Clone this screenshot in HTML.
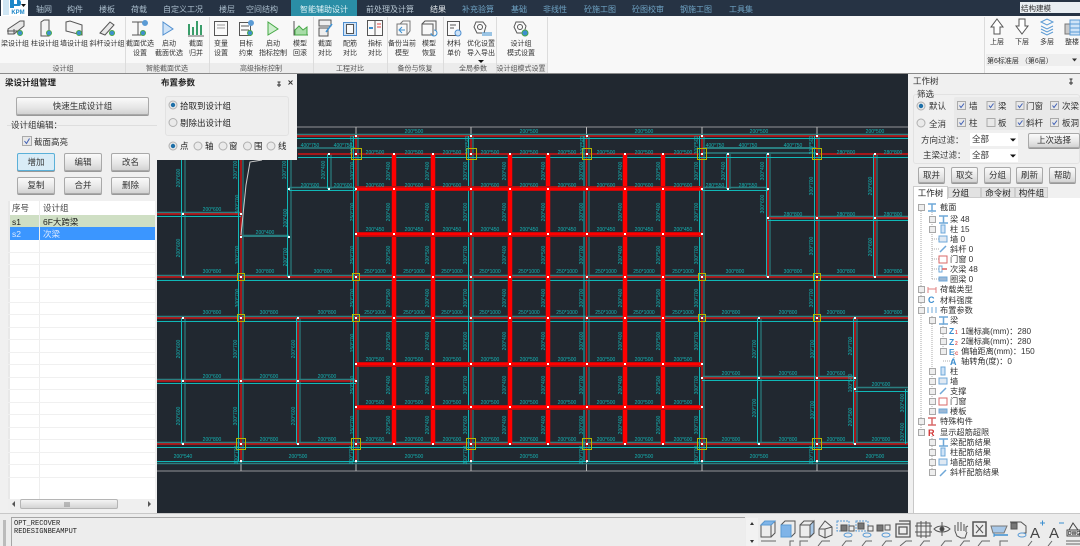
<!DOCTYPE html>
<html><head><meta charset="utf-8"><title>PKPM</title>
<style>
html,body{margin:0;padding:0;width:1080px;height:546px;overflow:hidden;background:#f0f0f0}
body{position:relative;font-family:"Liberation Sans","Noto Sans CJK SC",sans-serif;color:#222;filter:blur(.35px)}
.a{position:absolute}
.btn{position:absolute;box-sizing:border-box;border:1px solid #a9a9a9;border-radius:2px;background:linear-gradient(#fafafa,#e6e6e6 60%,#d2d2d2);text-align:center;font-size:8.5px;color:#333;box-shadow:0 1px 0 #999}
svg{position:absolute;left:0;top:0;font-family:"Liberation Sans","Noto Sans CJK SC",sans-serif}
</style></head><body>
<!-- menu -->
<div class="a" style="left:0;top:0;width:1080px;height:16px;background:#263344"></div>
<div class="a" style="left:291px;top:0;width:66px;height:16px;background:#2a8ea6"></div>
<div class="a" style="left:0;top:16px;width:1080px;height:57px;background:#f8f8f8;border-bottom:1px solid #8a8a8a"></div>
<div class="a" style="left:0;top:63px;width:547px;height:10px;background:#ececec"></div>
<div class="a" style="left:1px;top:0;width:27px;height:16px;background:#fff"></div>
<div class="a" style="left:1020px;top:2px;width:60px;height:11px;background:#e9eef2"></div>
<!-- canvas -->
<div class="a" style="left:157px;top:74px;width:751px;height:439px;background:#212830"></div>

<svg width="1080" height="546" viewBox="0 0 1080 546">
<!-- CAD drawing -->
<g fill="none">
<path stroke="#6e7176" stroke-width="1.5" d="M157 127H908M157 471H908"/>
<path stroke="#b8b8b8" d="M356 127V136M471 127V136M586.5 127V136M702 127V136M817 127V136M241 461V471M356 461V471M471 461V471M586.5 461V471M702 461V471M817 461V471"/>
<path stroke="#2a7e80" stroke-width="1.5" d="M297 134.5H908M297 148H356M702 148H817M702 153H817M289 187.5H356M702 187.5H768M157 212.5H241M768 216.5H908M241 235.5H289M157 275.5H908M157 316.5H908M702 376.5H855M157 379.5H356M855 387.5H908M157 442.5H908M157 463.5H908"/>
<path stroke="#2a7e80" stroke-width="2" d="M768 217H908M241 236H289M702 148H817M702 377H855"/>
<path stroke="#2a7e80" stroke-width="1.2" d="M243 160V461M358 136V461M473 136V461M589 136V461M704 136V461M819 136V461M185 154V277M185 318V444M291 154V277M300 318V444M331 154V189M730 154V189M770 154V277M877 154V277M761 318V444M857 318V444M908 389V444"/>
<path stroke="#d01212" stroke-width="1.5" d="M297 136H908M298 154H702M817 154H908M157 214H241M768 218H908M157 277H908M157 318H908M702 378H855M157 381H356M157 444H908M241 160V461M356 136V461M471 136V461M586.5 136V461M702 136V461M817 136V461M298 318V444M728 154V189M768 154V277M875 154V277M855 318V444"/>
<path stroke="#10b8b8" d="M297 138.5H908M298 157.5H908M289 190.5H356M702 190.5H768M157 216.5H241M768 220.5H908M157 280.5H908M157 321.5H908M702 380.5H855M157 383.5H356M855 391.5H908M157 447.5H908M157 461.5H908M238.5 160V461M353.5 136V461M468.5 136V461M584 136V461M699.5 136V461M814.5 136V461M181.5 154V277M181.5 318V444M287.5 154V277M296.5 318V444M327.5 154V189M726.5 154V189M766.5 154V277M873.5 154V277M757.5 318V444M853.5 318V444M905.5 389V444"/>
<path stroke="#f00" stroke-width="4.5" d="M394 154V444M433 154V444M510 154V444M548 154V444M625 154V444M663 154V444"/>
<path stroke="#f00" stroke-width="3.5" d="M356 189H702M356 234H702M356 364H702M356 407H702"/>
<path stroke="#b01010" stroke-width="1" d="M356 186.5H702M356 236.5H702M356 366.5H702M356 409.5H702"/>
<path stroke="#ccc" d="M262 160L250 162L246 185L243 215L241 235"/>
<!-- yellow boxes -->
<g stroke="#b5b500" stroke-width="1">
<rect x="351.5" y="148.5" width="10" height="11"/><rect x="466.5" y="148.5" width="10" height="11"/><rect x="582.5" y="148.5" width="9" height="11"/><rect x="697.5" y="148.5" width="9" height="11"/><rect x="812.5" y="148.5" width="9" height="11"/>
<rect x="237.5" y="273.5" width="7" height="7"/><rect x="352.5" y="273.5" width="7" height="7"/><rect x="698.5" y="273.5" width="7" height="7"/><rect x="813.5" y="273.5" width="7" height="7"/>
<rect x="237.5" y="314.5" width="7" height="7"/><rect x="352.5" y="314.5" width="7" height="7"/><rect x="698.5" y="314.5" width="7" height="7"/><rect x="813.5" y="314.5" width="7" height="7"/>
<rect x="236.5" y="438.5" width="9" height="11"/><rect x="351.5" y="438.5" width="9" height="11"/><rect x="466.5" y="438.5" width="9" height="11"/><rect x="582.5" y="438.5" width="9" height="11"/><rect x="697.5" y="438.5" width="9" height="11"/><rect x="812.5" y="438.5" width="9" height="11"/>
</g>
<!-- nodes -->
<path stroke="#fff" stroke-width="2" stroke-dasharray="2 1000" d="M355 136H357M470 136H472M586 136H588M701 136H703M816 136H818M355 154H357M393 154H395M432 154H434M470 154H472M509 154H511M547 154H549M586 154H588M624 154H626M662 154H664M701 154H703M727 154H729M767 154H769M816 154H818M874 154H876M288 154H290M328 154H330M182 154H184M355 189H357M393 189H395M432 189H434M470 189H472M509 189H511M547 189H549M586 189H588M624 189H626M662 189H664M701 189H703M727 189H729M767 189H769M288 189H290M328 189H330M355 234H357M393 234H395M432 234H434M470 234H472M509 234H511M547 234H549M586 234H588M624 234H626M662 234H664M701 234H703M767 218H769M816 218H818M874 218H876M182 214H184M240 214H242M240 237H242M288 237H290M182 277H184M240 277H242M288 277H290M355 277H357M393 277H395M432 277H434M470 277H472M509 277H511M547 277H549M586 277H588M624 277H626M662 277H664M701 277H703M767 277H769M816 277H818M874 277H876M182 318H184M240 318H242M297 318H299M355 318H357M393 318H395M432 318H434M470 318H472M509 318H511M547 318H549M586 318H588M624 318H626M662 318H664M701 318H703M758 318H760M816 318H818M854 318H856M355 364H357M393 364H395M432 364H434M470 364H472M509 364H511M547 364H549M586 364H588M624 364H626M662 364H664M701 364H703M182 381H184M240 381H242M297 381H299M355 381H357M701 378H703M758 378H760M816 378H818M854 378H856M854 389H856M355 407H357M393 407H395M432 407H434M470 407H472M509 407H511M547 407H549M586 407H588M624 407H626M662 407H664M701 407H703M182 444H184M240 444H242M297 444H299M355 444H357M393 444H395M432 444H434M470 444H472M509 444H511M547 444H549M586 444H588M624 444H626M662 444H664M701 444H703M758 444H760M816 444H818M854 444H856M240 461H242M355 461H357M470 461H472M586 461H588M701 461H703M816 461H818"/>
</g>
<!-- CAD labels horizontal -->
<g fill="#14b4b4" font-size="5" text-anchor="middle">
<text x="414" y="133">200*500</text><text x="529" y="133">200*500</text><text x="644" y="133">200*500</text><text x="759" y="133">200*500</text><text x="875" y="133">200*500</text>
<text x="310" y="147">400*750</text><text x="343" y="147">400*750</text><text x="715" y="147">400*750</text><text x="748" y="147">400*750</text><text x="793" y="147">400*750</text>
<text x="375" y="154">200*500</text><text x="414" y="154">200*500</text><text x="452" y="154">200*500</text><text x="490" y="154">200*500</text><text x="529" y="154">200*500</text><text x="567" y="154">200*500</text><text x="606" y="154">200*500</text><text x="644" y="154">200*500</text><text x="683" y="154">200*500</text><text x="846" y="154">280*800</text><text x="893" y="154">280*800</text>
<text x="310" y="187">200*600</text><text x="343" y="187">200*600</text><text x="375" y="187">200*600</text><text x="414" y="187">200*600</text><text x="452" y="187">200*600</text><text x="490" y="187">200*600</text><text x="529" y="187">200*600</text><text x="567" y="187">200*600</text><text x="606" y="187">200*600</text><text x="644" y="187">200*600</text><text x="683" y="187">200*600</text><text x="715" y="187">280*550</text><text x="748" y="187">280*550</text>
<text x="212" y="211">200*600</text><text x="793" y="216">280*800</text><text x="846" y="216">280*800</text><text x="893" y="216">280*800</text>
<text x="375" y="231">200*450</text><text x="414" y="231">200*450</text><text x="452" y="231">200*450</text><text x="490" y="231">200*450</text><text x="529" y="231">200*450</text><text x="567" y="231">200*450</text><text x="606" y="231">200*450</text><text x="644" y="231">200*450</text><text x="683" y="231">200*450</text><text x="265" y="234">200*400</text>
<text x="212" y="273">300*800</text><text x="265" y="273">300*800</text><text x="323" y="273">300*800</text><text x="375" y="273">250*1000</text><text x="414" y="273">250*1000</text><text x="452" y="273">250*1000</text><text x="490" y="273">250*1000</text><text x="529" y="273">250*1000</text><text x="567" y="273">250*1000</text><text x="606" y="273">250*1000</text><text x="644" y="273">250*1000</text><text x="683" y="273">250*1000</text><text x="735" y="273">300*800</text><text x="793" y="273">300*800</text><text x="846" y="273">300*800</text><text x="893" y="273">300*800</text>
<text x="212" y="314">300*800</text><text x="269" y="314">300*800</text><text x="327" y="314">300*800</text><text x="375" y="314">250*1000</text><text x="414" y="314">250*1000</text><text x="452" y="314">250*1000</text><text x="490" y="314">250*1000</text><text x="529" y="314">250*1000</text><text x="567" y="314">250*1000</text><text x="606" y="314">250*1000</text><text x="644" y="314">250*1000</text><text x="683" y="314">250*1000</text><text x="731" y="314">200*800</text><text x="788" y="314">200*800</text><text x="836" y="314">200*800</text><text x="893" y="314">300*800</text>
<text x="375" y="361">200*500</text><text x="414" y="361">200*500</text><text x="452" y="361">200*500</text><text x="490" y="361">200*500</text><text x="529" y="361">200*500</text><text x="567" y="361">200*500</text><text x="606" y="361">200*500</text><text x="644" y="361">200*500</text><text x="683" y="361">200*500</text>
<text x="731" y="375">200*600</text><text x="788" y="375">200*600</text><text x="836" y="375">200*600</text><text x="212" y="378">200*600</text><text x="269" y="378">200*600</text><text x="327" y="378">200*600</text><text x="881" y="386">200*600</text>
<text x="375" y="404">200*500</text><text x="414" y="404">200*500</text><text x="452" y="404">200*500</text><text x="490" y="404">200*500</text><text x="529" y="404">200*500</text><text x="567" y="404">200*500</text><text x="606" y="404">200*500</text><text x="644" y="404">200*500</text><text x="683" y="404">200*500</text>
<text x="212" y="441">200*800</text><text x="269" y="441">200*800</text><text x="327" y="441">200*800</text><text x="375" y="441">200*600</text><text x="414" y="441">200*600</text><text x="452" y="441">200*600</text><text x="490" y="441">200*600</text><text x="529" y="441">200*600</text><text x="567" y="441">200*600</text><text x="606" y="441">200*600</text><text x="644" y="441">200*600</text><text x="683" y="441">200*600</text><text x="731" y="441">200*800</text><text x="788" y="441">200*800</text><text x="836" y="441">200*800</text><text x="881" y="441">200*800</text>
<text x="183" y="458">200*540</text><text x="298" y="458">200*500</text><text x="414" y="458">200*500</text><text x="529" y="458">200*500</text><text x="644" y="458">200*500</text><text x="759" y="458">200*500</text><text x="875" y="458">200*500</text>
</g>
<!-- CAD labels vertical -->
<g fill="#14b4b4" font-size="5" text-anchor="middle">
<text transform="translate(354,145) rotate(-90)">300*500</text><text transform="translate(469,145) rotate(-90)">300*500</text><text transform="translate(584,145) rotate(-90)">300*500</text><text transform="translate(698,145) rotate(-90)">300*500</text><text transform="translate(813,145) rotate(-90)">300*500</text>
<text transform="translate(354,171) rotate(-90)">100*700</text><text transform="translate(390,171) rotate(-90)">200*400</text><text transform="translate(429,171) rotate(-90)">200*400</text><text transform="translate(467,171) rotate(-90)">300*600</text><text transform="translate(506,171) rotate(-90)">200*400</text><text transform="translate(545,171) rotate(-90)">200*400</text><text transform="translate(583,171) rotate(-90)">300*600</text><text transform="translate(622,171) rotate(-90)">200*400</text><text transform="translate(660,171) rotate(-90)">200*500</text><text transform="translate(698,171) rotate(-90)">300*700</text><text transform="translate(725,171) rotate(-90)">300*400</text><text transform="translate(764,171) rotate(-90)">300*400</text><text transform="translate(237,170) rotate(-90)">300*700</text><text transform="translate(286,170) rotate(-90)">100*700</text><text transform="translate(325,170) rotate(-90)">200*400</text>
<text transform="translate(180,178) rotate(-90)">200*600</text><text transform="translate(813,186) rotate(-90)">300*700</text><text transform="translate(872,186) rotate(-90)">200*600</text>
<text transform="translate(239,204) rotate(-90)">500*700</text><text transform="translate(764,204) rotate(-90)">300*600</text>
<text transform="translate(354,212) rotate(-90)">250*700</text><text transform="translate(390,212) rotate(-90)">200*400</text><text transform="translate(429,212) rotate(-90)">200*400</text><text transform="translate(467,212) rotate(-90)">300*600</text><text transform="translate(506,212) rotate(-90)">200*400</text><text transform="translate(545,212) rotate(-90)">200*400</text><text transform="translate(583,212) rotate(-90)">300*600</text><text transform="translate(622,212) rotate(-90)">200*400</text><text transform="translate(660,212) rotate(-90)">200*400</text><text transform="translate(698,212) rotate(-90)">200*700</text><text transform="translate(287,218) rotate(-90)">200*400</text>
<text transform="translate(180,248) rotate(-90)">200*600</text><text transform="translate(813,246) rotate(-90)">300*700</text><text transform="translate(872,247) rotate(-90)">200*600</text><text transform="translate(239,255) rotate(-90)">300*700</text><text transform="translate(287,257) rotate(-90)">200*700</text>
<text transform="translate(354,255) rotate(-90)">250*700</text><text transform="translate(390,255) rotate(-90)">200*500</text><text transform="translate(429,255) rotate(-90)">200*500</text><text transform="translate(467,255) rotate(-90)">300*700</text><text transform="translate(506,255) rotate(-90)">200*400</text><text transform="translate(545,255) rotate(-90)">200*500</text><text transform="translate(583,255) rotate(-90)">300*700</text><text transform="translate(622,255) rotate(-90)">200*400</text><text transform="translate(660,255) rotate(-90)">200*500</text><text transform="translate(698,255) rotate(-90)">300*700</text>
<text transform="translate(239,298) rotate(-90)">300*700</text><text transform="translate(354,298) rotate(-90)">250*700</text><text transform="translate(390,298) rotate(-90)">200*500</text><text transform="translate(429,298) rotate(-90)">200*400</text><text transform="translate(467,298) rotate(-90)">300*700</text><text transform="translate(506,298) rotate(-90)">200*400</text><text transform="translate(545,298) rotate(-90)">200*400</text><text transform="translate(583,298) rotate(-90)">300*700</text><text transform="translate(622,298) rotate(-90)">200*400</text><text transform="translate(660,298) rotate(-90)">200*500</text><text transform="translate(698,298) rotate(-90)">300*700</text><text transform="translate(813,298) rotate(-90)">300*700</text>
<text transform="translate(354,343) rotate(-90)">150*700</text><text transform="translate(390,341) rotate(-90)">200*500</text><text transform="translate(429,341) rotate(-90)">200*400</text><text transform="translate(467,341) rotate(-90)">300*600</text><text transform="translate(506,341) rotate(-90)">200*400</text><text transform="translate(545,341) rotate(-90)">200*400</text><text transform="translate(583,341) rotate(-90)">300*600</text><text transform="translate(622,341) rotate(-90)">200*400</text><text transform="translate(660,341) rotate(-90)">200*500</text><text transform="translate(698,341) rotate(-90)">300*700</text><text transform="translate(852,346) rotate(-90)">200*700</text>
<text transform="translate(180,349) rotate(-90)">200*600</text><text transform="translate(237,349) rotate(-90)">300*700</text><text transform="translate(295,349) rotate(-90)">200*600</text><text transform="translate(756,349) rotate(-90)">200*700</text><text transform="translate(814,349) rotate(-90)">300*700</text>
<text transform="translate(354,385) rotate(-90)">250*700</text><text transform="translate(390,385) rotate(-90)">200*400</text><text transform="translate(429,385) rotate(-90)">200*400</text><text transform="translate(467,385) rotate(-90)">300*700</text><text transform="translate(506,385) rotate(-90)">200*400</text><text transform="translate(545,385) rotate(-90)">200*400</text><text transform="translate(583,385) rotate(-90)">300*700</text><text transform="translate(622,385) rotate(-90)">200*400</text><text transform="translate(660,385) rotate(-90)">200*500</text><text transform="translate(698,385) rotate(-90)">300*700</text><text transform="translate(852,383) rotate(-90)">100*500</text>
<text transform="translate(904,403) rotate(-90)">300*400</text><text transform="translate(756,408) rotate(-90)">200*700</text><text transform="translate(814,410) rotate(-90)">300*700</text><text transform="translate(852,417) rotate(-90)">200*500</text><text transform="translate(180,416) rotate(-90)">200*600</text><text transform="translate(237,416) rotate(-90)">300*700</text><text transform="translate(295,416) rotate(-90)">200*600</text>
<text transform="translate(354,425) rotate(-90)">150*700</text><text transform="translate(390,425) rotate(-90)">200*500</text><text transform="translate(429,425) rotate(-90)">200*400</text><text transform="translate(467,425) rotate(-90)">300*600</text><text transform="translate(506,425) rotate(-90)">200*400</text><text transform="translate(545,425) rotate(-90)">200*400</text><text transform="translate(583,425) rotate(-90)">300*600</text><text transform="translate(622,425) rotate(-90)">200*400</text><text transform="translate(660,425) rotate(-90)">200*500</text><text transform="translate(698,425) rotate(-90)">300*700</text><text transform="translate(904,432) rotate(-90)">300*400</text>
<text transform="translate(238,455) rotate(-90)">300*700</text><text transform="translate(353,455) rotate(-90)">300*700</text><text transform="translate(467,455) rotate(-90)">300*700</text><text transform="translate(583,455) rotate(-90)">300*700</text><text transform="translate(698,455) rotate(-90)">300*700</text><text transform="translate(813,455) rotate(-90)">300*700</text>
</g>
</svg>

<!-- left panel -->
<div class="a" style="left:0;top:74px;width:157px;height:439px;background:#f0f0f0"></div>
<div class="a" style="left:157px;top:74px;width:140px;height:86px;background:#f0f0f0"></div>
<div class="a" style="left:165px;top:96px;width:122px;height:38px;border:1px solid #e2e2e2;border-radius:3px;background:#eeeeee"></div>
<div class="a" style="left:7px;top:125px;width:150px;height:1px;background:#dedede"></div>
<div class="btn" style="left:16px;top:97px;width:133px;height:18px;line-height:16px">快速生成设计组</div>
<div class="btn" style="left:17px;top:153px;width:38px;height:18px;line-height:16px;background:#d9ecf7;border-color:#5bb0d8">增加</div>
<div class="btn" style="left:64px;top:153px;width:38px;height:18px;line-height:16px">编辑</div>
<div class="btn" style="left:111px;top:153px;width:39px;height:18px;line-height:16px">改名</div>
<div class="btn" style="left:17px;top:177px;width:38px;height:17px;line-height:15px">复制</div>
<div class="btn" style="left:64px;top:177px;width:38px;height:17px;line-height:15px">合并</div>
<div class="btn" style="left:111px;top:177px;width:39px;height:17px;line-height:15px">删除</div>
<!-- table -->
<div class="a" style="left:8px;top:201px;width:147px;height:298px;background:#fff"></div>
<div class="a" style="left:8px;top:201px;width:2px;height:298px;background:#e8e8e8"></div>
<div class="a" style="left:10px;top:215px;width:145px;height:12px;background:#cfdfc4"></div>
<div class="a" style="left:10px;top:227px;width:145px;height:13px;background:#3b96ff"></div>
<div class="a" style="left:39px;top:201px;width:1px;height:298px;background:#eeeeee"></div>
<div class="a" style="left:8px;top:252px;width:147px;height:1px;background:#f0f0f0;box-shadow:0 12px #f0f0f0,0 25px #f0f0f0,0 37px #f0f0f0,0 50px #f0f0f0,0 62px #f0f0f0,0 75px #f0f0f0,0 87px #f0f0f0,0 100px #f0f0f0,0 112px #f0f0f0,0 125px #f0f0f0,0 137px #f0f0f0,0 150px #f0f0f0,0 162px #f0f0f0,0 175px #f0f0f0,0 187px #f0f0f0,0 200px #f0f0f0,0 212px #f0f0f0,0 225px #f0f0f0"></div>
<div class="a" style="left:8px;top:499px;width:147px;height:11px;background:#efefef"></div>
<div class="a" style="left:20px;top:499px;width:98px;height:10px;box-sizing:border-box;border:1px solid #b5b5b5;border-radius:2px;background:linear-gradient(#f4f4f4,#d4d4d4)"></div>
<!-- right panel -->
<div class="a" style="left:908px;top:74px;width:172px;height:439px;background:#f0f0f0"></div>
<div class="a" style="left:913px;top:198px;width:167px;height:315px;background:#fff;border-left:1px solid #c8c8c8"></div>
<div class="a" style="left:913px;top:94px;width:167px;height:70px;border:1px solid #e2e2e2;border-radius:3px;box-sizing:border-box"></div>
<div class="a" style="left:954px;top:97px;width:126px;height:33px;background:#e9e9e9;border-radius:2px"></div>
<div class="a" style="left:970px;top:133px;width:48px;height:13px;background:#fff"></div>
<div class="a" style="left:970px;top:149px;width:48px;height:13px;background:#fff"></div>
<div class="btn" style="left:1028px;top:133px;width:52px;height:15px;line-height:13px;font-size:8.5px">上次选择</div>
<div class="btn" style="left:918px;top:167px;width:27px;height:16px;line-height:14px">取并</div>
<div class="btn" style="left:951px;top:167px;width:27px;height:16px;line-height:14px">取交</div>
<div class="btn" style="left:984px;top:167px;width:27px;height:16px;line-height:14px">分组</div>
<div class="btn" style="left:1016px;top:167px;width:27px;height:16px;line-height:14px">刷新</div>
<div class="btn" style="left:1049px;top:167px;width:27px;height:16px;line-height:14px">帮助</div>
<div class="a" style="left:913px;top:186px;width:35px;height:13px;background:#fff;border:1px solid #ccc;border-bottom:0;box-sizing:border-box;font-size:8.5px;text-align:center;line-height:12px">工作树</div>
<div class="a" style="left:948px;top:187px;width:33px;height:11px;background:#e2e2e2;border:1px solid #ccc;box-sizing:border-box;font-size:8.5px;text-align:left;padding-left:3px;line-height:10px">分组</div>
<div class="a" style="left:981px;top:187px;width:34px;height:11px;background:#e2e2e2;border:1px solid #ccc;box-sizing:border-box;font-size:8.5px;text-align:center;line-height:10px">命令树</div>
<div class="a" style="left:1015px;top:187px;width:33px;height:11px;background:#e2e2e2;border:1px solid #ccc;box-sizing:border-box;font-size:8.5px;text-align:center;line-height:10px">构件组</div>
<!-- console & bottom -->
<div class="a" style="left:0;top:513px;width:1080px;height:33px;background:#ececec;border-top:1px solid #c8c8c8;box-sizing:border-box"></div>
<div class="a" style="left:11px;top:517px;width:734px;height:29px;border:1px solid #a5a5a5;border-right:0;border-bottom:0;box-sizing:border-box;background:#ededed;font:7px/8px 'Liberation Mono',monospace;padding:2px 0 0 2px;color:#222">OPT_RECOVER<br>REDESIGNBEAMPUT</div>
<div class="a" style="left:3px;top:520px;width:3px;height:26px;background:#bbb"></div>
<div class="a" style="left:746px;top:518px;width:12px;height:28px;background:#f2f2f2"></div>

<svg width="1080" height="546" viewBox="0 0 1080 546">
<!-- separators -->
<path fill="none" stroke="#dcdcdc" d="M125.5 17V73M209.5 17V73M313.5 17V73M387.5 17V73M443.5 17V73M496.5 17V73M547.5 17V73M984.5 17V73"/>
<!-- logo -->
<path d="M10 0H14V8H10ZM14 0H19Q21 0 21 3T19 6H14V4H17V0Z" fill="#1e87c8"/>
<rect x="3" y="0" width="6" height="15" fill="#cfe6f4"/>
<text x="18" y="14" font-size="6" font-weight="bold" fill="#1e87c8" text-anchor="middle" font-family="Liberation Sans">KPM</text>
<path d="M21 4H26L23.500 7Z" fill="#111"/>
<!-- menu text -->
<g fill="#a9bccb" font-size="8" text-anchor="middle">
<text x="44" y="12">轴网</text><text x="75" y="12">构件</text><text x="107" y="12">楼板</text><text x="139" y="12">荷载</text><text x="183" y="12">自定义工况</text><text x="227" y="12">楼层</text><text x="262" y="12">空间结构</text>
<text x="324" y="12" fill="#dff2f6">智能辅助设计</text>
<text x="390" y="12" fill="#b9c8d4">前处理及计算</text><text x="438" y="12" fill="#e0e6ea">结果</text>
</g>
<g fill="#6fa3c4" font-size="8" text-anchor="middle">
<text x="478" y="12">补充验算</text><text x="519" y="12">基础</text><text x="555" y="12">非线性</text><text x="600" y="12">砼施工图</text><text x="648" y="12">砼图校审</text><text x="696" y="12">钢施工图</text><text x="741" y="12">工具集</text>
</g>
<text x="1021" y="11" font-size="7.5" fill="#333">结构建模</text>
<!-- ribbon labels -->
<g fill="#333" font-size="7" text-anchor="middle">
<text x="15" y="45.5">梁设计组</text><text x="45" y="45.5">柱设计组</text><text x="74" y="45.5">墙设计组</text><text x="107" y="45.5">斜杆设计组</text>
<text x="140" y="45.5">截面优选</text><text x="140" y="55">设置</text><text x="169" y="45.5">启动</text><text x="169" y="55">截面优选</text><text x="196" y="45.5">截面</text><text x="196" y="55">归并</text>
<text x="221" y="45.5">变量</text><text x="221" y="55">设置</text><text x="246" y="45.5">目标</text><text x="246" y="55">约束</text><text x="273" y="45.5">启动</text><text x="273" y="55">指标控制</text><text x="300" y="45.5">模型</text><text x="300" y="55">回滚</text>
<text x="325" y="45.5">截面</text><text x="325" y="55">对比</text><text x="350" y="45.5">配筋</text><text x="350" y="55">对比</text><text x="375" y="45.5">指标</text><text x="375" y="55">对比</text>
<text x="402" y="45.5">备份当前</text><text x="402" y="55">模型</text><text x="429" y="45.5">模型</text><text x="429" y="55">恢复</text><text x="454" y="45.5">材料</text><text x="454" y="55">单价</text><text x="481" y="45.5">优化设置</text><text x="481" y="55">导入导出</text><text x="521" y="45.5">设计组</text><text x="521" y="55">模式设置</text>
<g fill="#555"><text x="63" y="70.5">设计组</text><text x="167" y="70.5">智能截面优选</text><text x="261" y="70.5">高级指标控制</text><text x="350" y="70.5">工程对比</text><text x="415" y="70.5">备份与恢复</text><text x="473" y="70.5">全局参数</text><text x="521" y="70.5">设计组模式设置</text></g>
<text x="997" y="44">上层</text><text x="1022" y="44">下层</text><text x="1047" y="44">多层</text><text x="1072" y="44">整楼</text>
</g>
<path d="M478 60H484L481 63Z" fill="#111"/>
<rect x="986" y="54" width="94" height="12" fill="#eeeeee"/>
<text x="987" y="63" font-size="7" fill="#333">第6标准层 （第6层）</text>
<path d="M1072 58.5H1077L1074.5 61.5Z" fill="#333"/>
<!-- ribbon icons -->
<g fill="none" stroke="#555" stroke-width="1">
<path d="M8 29L20 21H24V26L14 34H8Z" fill="#e8e8e8"/><path d="M7 31H22M14 34V29"/><circle cx="20" cy="33" r="2.5" fill="#3d8fd0" stroke="#4aa84a"/>
<path d="M41 30V22L44 20H49V36H41Z" fill="#f4f4f4"/><circle cx="49" cy="33" r="2.5" fill="#3d8fd0" stroke="#4aa84a"/>
<path d="M66 22L70 21L82 25V35L66 31Z" fill="#f4f4f4"/><circle cx="79" cy="33" r="2.5" fill="#3d8fd0" stroke="#4aa84a"/>
<path d="M100 33L110 22L114 25L105 35Z" fill="#e8e8e8"/><circle cx="112" cy="33" r="2.5" fill="#3d8fd0" stroke="#4aa84a"/>
<path d="M132 22H144M138 22V35M132 35H142"/><circle cx="145" cy="23" r="2.5" fill="#5b9bd5" stroke="#5b9bd5"/><circle cx="143" cy="33" r="2.5" fill="#3d8fd0" stroke="#4aa84a"/>
<path d="M163 22L173 29L163 35Z" fill="#cfe3f7" stroke="#4f8fd0"/>
<path d="M189 35V24M193 35V27M197 35V21M201 35V25" stroke="#3a9d6a" stroke-width="2"/><path d="M188 36H204" stroke="#666"/>
<rect x="214.5" y="21.5" width="13" height="14" fill="#fafafa"/><path d="M217 25H225M217 28H225" stroke="#999"/>
<rect x="239.5" y="22.5" width="11" height="13" fill="#fafafa"/><path d="M241 26H249M241 30H249"/><circle cx="250" cy="33" r="2.5" fill="#3d8fd0" stroke="#4aa84a"/><circle cx="251" cy="23" r="2.5" fill="#5b9bd5" stroke="#5b9bd5"/>
<path d="M268 22L278 29L268 35Z" fill="#cdeecd" stroke="#45a845"/>
<path d="M294 21V35H308" /><path d="M295 35V30L299 26L303 30L307 27V35Z" fill="#a8dca8" stroke="#45a845"/>
<rect x="319" y="20" width="12" height="6" fill="#eee"/><rect x="319" y="28" width="9" height="8" fill="#eee"/><path d="M326 32L332 24" stroke="#3d8fd0" stroke-width="1.5"/>
<rect x="343.5" y="22.5" width="13" height="13" fill="#cfe3f7" stroke="#4f8fd0"/><rect x="346.5" y="24.5" width="7" height="9" fill="#fafafa"/>
<rect x="367.5" y="20.5" width="15" height="15" fill="#fafafa"/><path d="M375 20V36"/><path d="M369 28H373" stroke="#3d8fd0" stroke-width="2"/><path d="M377 24H381M377 27H381" stroke="#e04040"/>
<path d="M397 24H407V35H397ZM400 24L403 21H410V31L407 35" stroke="#777"/><path d="M405 30H400M402 27L399 30L402 33" stroke="#3d8fd0"/>
<path d="M422 24H433V35H422ZM422 24L425 21H436V31" stroke="#555"/><path d="M431 33A3 3 0 1 0 434 30" stroke="#3d8fd0"/>
<rect x="447.5" y="21.5" width="12" height="14" fill="#fafafa"/><path d="M450 25H456M450 28H454"/><circle cx="458" cy="33" r="3" fill="#cfe3f7" stroke="#4f8fd0"/>
<path d="M474 27L476 22H483L486 26L484 33H477Z" fill="#fafafa"/><circle cx="480" cy="27" r="2.5"/><path d="M482 33H492M482 35H492" stroke="#3d8fd0"/>
<path d="M514 27L516 22H523L526 26L524 33H517Z" fill="#fafafa"/><circle cx="520" cy="27" r="2.5"/><circle cx="525" cy="33" r="3" fill="#3d8fd0" stroke="#4aa84a"/>
<path d="M997 19L1003 27H1000V34H994V27H991Z" fill="#fff"/>
<path d="M1022 34L1028 26H1025V19H1019V26H1016Z" fill="#fff"/>
<path d="M1041 22L1047 19L1053 22L1047 25ZM1041 26L1047 29L1053 26M1041 29L1047 32L1053 29M1041 32L1047 35L1053 32" stroke="#5b9bd5"/>
<rect x="1065" y="24" width="5" height="10" fill="#c9c9c9" stroke="#777"/><path d="M1070 20H1080V35H1070ZM1070 24H1080M1070 28H1080M1070 32H1080" stroke="#5b9bd5" fill="#cfe3f7"/>
</g>
<!-- left panel text -->
<g fill="#222" font-size="8.5">
<text x="5" y="85.5" font-weight="bold" font-size="8.5">梁设计组管理</text>
<text x="161" y="85.5" font-weight="bold">布置参数</text>
<text x="11" y="128" fill="#333">设计组编辑：</text>
<text x="34" y="145" fill="#333">截面高亮</text>
<text x="12" y="211" fill="#444">序号</text><text x="43" y="211" fill="#444">设计组</text>
<text x="12" y="225">s1</text><text x="43" y="225">6F大跨梁</text>
<text x="12" y="237" fill="#dbe9ff">s2</text><text x="43" y="237" fill="#dbe9ff">次梁</text>
<text x="180" y="109">拾取到设计组</text><text x="180" y="126">剔除出设计组</text>
<text x="180" y="149">点</text><text x="205" y="149">轴</text><text x="229" y="149">窗</text><text x="254" y="149">围</text><text x="278" y="149">线</text>
</g>
<path d="M279 82V85M277.5 82H280.5M277 85H281M279 85V87" stroke="#333" fill="none"/><path d="M288.5 80.5L292.5 84.5M292.5 80.5L288.5 84.5" stroke="#333" fill="none"/>
<!-- radios -->
<g fill="#eaeaea" stroke="#b0b0b0">
<circle cx="173" cy="105" r="4"/><circle cx="173" cy="122.5" r="4"/><circle cx="173" cy="146" r="4"/><circle cx="198" cy="146" r="4"/><circle cx="223" cy="146" r="4"/><circle cx="247.5" cy="146" r="4"/><circle cx="271" cy="146" r="4"/><circle cx="921" cy="106" r="4"/><circle cx="921" cy="123" r="4"/>
</g>
<g fill="#1d6fa8"><circle cx="173" cy="105" r="2.2"/><circle cx="173" cy="146" r="2.2"/><circle cx="921" cy="106" r="2.2"/></g>
<!-- checkboxes -->
<g fill="#e8e8e8" stroke="#aaa">
<rect x="22.5" y="136.5" width="9" height="9"/><rect x="957.5" y="101.5" width="8" height="8"/><rect x="987" y="101.5" width="8" height="8"/><rect x="1016" y="101.5" width="8" height="8"/><rect x="1050.5" y="101.5" width="8" height="8"/><rect x="957.5" y="118.5" width="8" height="8"/><rect x="987" y="118.5" width="8" height="8"/><rect x="1016" y="118.5" width="8" height="8"/><rect x="1050.5" y="118.5" width="8" height="8"/>
</g>
<path fill="none" stroke="#3f5fb5" d="M24.5 141L26.5 143.5L29.5 138.5M959.5 105.5L961 107.5L964 103.5M989 105.5L990.5 107.5L993.5 103.5M1018 105.5L1019.5 107.5L1022.5 103.5M1052.5 105.5L1054 107.5L1057 103.5M959.5 122.5L961 124.5L964 120.5M1018 122.5L1019.5 124.5L1022.5 120.5M1052.5 122.5L1054 124.5L1057 120.5"/>
<!-- right panel text -->
<g fill="#333" font-size="8.5">
<text x="913" y="84">工作树</text><text x="917" y="97">筛选</text>
<text x="929" y="109">默认</text><text x="929" y="127">全消</text>
<text x="969" y="109">墙</text><text x="998" y="109">梁</text><text x="1026" y="109">门窗</text><text x="1062" y="109">次梁</text>
<text x="969" y="126">柱</text><text x="998" y="126">板</text><text x="1026" y="126">斜杆</text><text x="1062" y="126">板洞</text>
<text x="921" y="143">方向过滤：</text><text x="972" y="142">全部</text><text x="923" y="158">主梁过滤：</text><text x="972" y="158">全部</text>
</g>
<path d="M1010 138.5H1016L1013 141.5Z M1010 154.5H1016L1013 157.5Z" fill="#111"/>
<path d="M1071 79V83M1069.500 79H1072.500M1069 83H1073M1071 83V85" stroke="#333" fill="none"/>
<!-- tree lines & boxes -->
<path fill="none" stroke="#aaa" stroke-dasharray="1 1" d="M921 211V432M932 212V279M932 316V411M943 324V351M932 436V472M932 279H940M943 361H952M932 239H940M932 249H940M932 259H940M932 269H940M954 351V361"/>
<g fill="#eee" stroke="#a8a8a8"><rect x="918.500" y="204.500" width="6" height="6"/><rect x="929.500" y="216.500" width="6" height="6"/><rect x="929.500" y="226.500" width="6" height="6"/><rect x="918.500" y="286.500" width="6" height="6"/><rect x="918.500" y="296.500" width="6" height="6"/><rect x="918.500" y="307.500" width="6" height="6"/><rect x="929.500" y="317.500" width="6" height="6"/><rect x="940.500" y="327.500" width="6" height="6"/><rect x="940.500" y="338.500" width="6" height="6"/><rect x="940.500" y="348.500" width="6" height="6"/><rect x="929.500" y="368.500" width="6" height="6"/><rect x="929.500" y="378.500" width="6" height="6"/><rect x="929.500" y="388.500" width="6" height="6"/><rect x="929.500" y="398.500" width="6" height="6"/><rect x="929.500" y="408.500" width="6" height="6"/><rect x="918.500" y="418.500" width="6" height="6"/><rect x="918.500" y="429.500" width="6" height="6"/><rect x="929.500" y="439.500" width="6" height="6"/><rect x="929.500" y="449.500" width="6" height="6"/><rect x="929.500" y="459.500" width="6" height="6"/><rect x="929.500" y="469.500" width="6" height="6"/></g>
<!-- tree icons -->
<g fill="none" stroke="#6fa8d8" stroke-width="1.5">
<path d="M928 204H936M932 204V211M928 211H936"/><path d="M939 216H948M943.500 216V223M939 223H948"/><rect x="941" y="225" width="4" height="8" fill="#cfe3f7" stroke-width="1"/><rect x="939" y="236" width="8" height="6" fill="#dfe9f3" stroke-width="1"/><path d="M940 252L946 246"/><rect x="939" y="256" width="8" height="7" stroke="#d96a6a" stroke-width="1"/><rect x="939" y="266" width="3" height="6" stroke-width="1"/><path d="M942 269H947" stroke="#e06060"/><rect x="939" y="277" width="8" height="4" fill="#9cb9d6" stroke-width="1"/>
<path d="M928 287V293M936 287V293M928 289H936" stroke="#e08080" stroke-width="1"/><path d="M928 307V313M936 307V313M932 307V313" stroke-width="1"/><path d="M939 317H948M943.500 317V324M939 324H948"/>
<rect x="941" y="367" width="4" height="8" fill="#cfe3f7" stroke-width="1"/><rect x="939" y="378" width="8" height="6" fill="#dfe9f3" stroke-width="1"/><path d="M940 394L946 388"/><rect x="939" y="398" width="8" height="7" stroke="#d96a6a" stroke-width="1"/><rect x="939" y="409" width="8" height="4" fill="#9cb9d6" stroke-width="1"/>
<path d="M928 418H936M932 418V425M928 425H936" stroke="#d96a6a"/>
<path d="M939 439H948M943.500 439V446M939 446H948"/><rect x="941" y="448" width="4" height="8" fill="#cfe3f7" stroke-width="1"/><rect x="939" y="459" width="8" height="6" fill="#dfe9f3" stroke-width="1"/><path d="M940 476L946 470"/>
</g>
<g font-size="8" font-weight="bold">
<text x="928" y="303" fill="#3d8fd0" font-size="9">C</text><text x="928" y="436" fill="#d03030" font-size="9">R</text>
<text x="949" y="334" fill="#3d8fd0" font-size="8.500">Z</text><text x="955" y="334" fill="#e06060" font-size="5">1</text>
<text x="949" y="345" fill="#3d8fd0" font-size="8.500">Z</text><text x="955" y="345" fill="#e06060" font-size="5">2</text>
<text x="949" y="355" fill="#3d8fd0" font-size="8">E</text><text x="955" y="355" fill="#e06060" font-size="6">c</text>
<text x="950" y="365" fill="#3d8fd0" font-size="9">A</text>
</g>
<!-- tree text -->
<g fill="#333" font-size="8.200">
<text x="940" y="210">截面</text><text x="950" y="222">梁 48</text><text x="950" y="232">柱 15</text><text x="950" y="242">墙 0</text><text x="950" y="252">斜杆 0</text><text x="950" y="262">门窗 0</text><text x="950" y="272">次梁 48</text><text x="950" y="282">圈梁 0</text>
<text x="940" y="292">荷载类型</text><text x="940" y="303">材料强度</text><text x="940" y="313">布置参数</text><text x="950" y="323">梁</text>
<text x="961" y="334">1端标高(mm)：280</text><text x="961" y="344">2端标高(mm)：280</text><text x="961" y="354">偏轴距离(mm)：150</text><text x="961" y="364">轴转角(度)：0</text>
<text x="950" y="374">柱</text><text x="950" y="384">墙</text><text x="950" y="394">支撑</text><text x="950" y="404">门窗</text><text x="950" y="414">楼板</text>
<text x="940" y="424">特殊构件</text><text x="940" y="435">显示超筋超限</text><text x="950" y="445">梁配筋结果</text><text x="950" y="455">柱配筋结果</text><text x="950" y="465">墙配筋结果</text><text x="950" y="475">斜杆配筋结果</text>
</g>
<!-- scrollbar arrows -->
<path d="M15 501L12 504L15 507ZM148 501L151 504L148 507Z" fill="#555"/><path d="M65 502V507M67 502V507M69 502V507" stroke="#888"/>
<path d="M750 525L752 522L754 525ZM750 540L752 543L754 540Z" fill="#333"/>
<!-- bottom toolbar icons -->
<g fill="none" stroke="#555" stroke-width="1">
<path d="M761 525H771V537H761ZM761 525L765 521H775V533L771 537M771 525L775 521" /><path d="M761 525L765 521H775L771 525Z" fill="#7fb4e8" stroke="#5b9bd5"/>
<path d="M781 525H791V537H781ZM781 525L785 521H795V533L791 537" /><rect x="781" y="525" width="10" height="12" fill="#7fb4e8" stroke="#5b9bd5"/>
<path d="M800 525H810V537H800ZM800 525L804 521H814V533L810 537" /><path d="M810 525L814 521V533L810 537Z" fill="#a8c8e8"/>
<path d="M819 529L825 521L832 527V535L825 538L819 535ZM825 538V529L819 529M825 529L832 527"/>
<rect x="837" y="521" width="12" height="10" stroke="#5b9bd5" stroke-dasharray="2 1"/><rect x="841" y="525" width="6" height="6" fill="#777"/><rect x="849" y="526" width="5" height="5"/><ellipse cx="848" cy="535" rx="4" ry="2" stroke="#5b9bd5"/>
<rect x="856" y="521" width="12" height="10" stroke="#5b9bd5" stroke-dasharray="2 1"/><rect x="858" y="523" width="6" height="6" fill="#777"/><rect x="868" y="526" width="5" height="5"/><ellipse cx="867" cy="535" rx="4" ry="2" stroke="#5b9bd5"/>
<rect x="877" y="525" width="6" height="6" fill="#777"/><rect x="885" y="525" width="5" height="5"/><ellipse cx="886" cy="535" rx="4" ry="2" stroke="#5b9bd5"/>
<path d="M896 524H910V537H896ZM899 521H910V533M899 527H907V534H899Z" stroke-width="1.300"/>
<path d="M917 523H930V536H917ZM921 521V538M926 521V538M915 526H932M915 532H932"/>
<path d="M934 529C938 525 946 525 950 529C946 533 938 533 934 529ZM942 522V536" /><circle cx="942" cy="529" r="2" fill="#444"/>
<path d="M955 531V525M958 531V522M961 531V522M964 531V524M966 532V527L968 526M955 531L957 536L961 538H965L967 532"/>
<rect x="973" y="522" width="13" height="14" stroke-width="1.500"/><path d="M976 525L983 533M983 525L976 533"/>
<path d="M991 526L1007 526L1004 533H993Z" fill="#a8c8e8" stroke="#777"/><path d="M994 535H1008" stroke="#3d8fd0" stroke-width="1.500"/><path d="M994 533V537" stroke="#3d8fd0"/>
<path d="M1010 522H1021L1026 526V533H1021" /><rect x="1011" y="523" width="6" height="6" fill="#777"/><ellipse cx="1022" cy="535" rx="4" ry="2" stroke="#5b9bd5"/>
</g>
<g fill="#444" font-size="15" font-family="Liberation Sans"><text x="1030" y="538">A</text><text x="1049" y="538">A</text></g>
<path d="M1040 523H1045M1042.500 520.500V525.500M1059 523H1064" stroke="#3d8fd0" fill="none"/>
<path d="M1067 536H1080V530H1067ZM1073 523L1069 530H1078Z" fill="none" stroke="#444"/>
<text x="1068" y="535" font-size="5" font-weight="bold" fill="#333">DWG</text>
<path fill="none" stroke="#666" d="M761 541H776M790 546V541H794M800 546V541H808M818 546L822 541H830M842 546L846 541H852M862 546L866 541H872M882 546L886 541H892M900 546L906 541H912M920 546L924 541H930M941 546L945 541H952M960 546L964 541H970M978 546L982 541H990M1000 546V541H1008M1028 546L1032 541M1048 546L1052 541M1066 541H1080M1066 544H1080"/>
</svg>
</body></html>
